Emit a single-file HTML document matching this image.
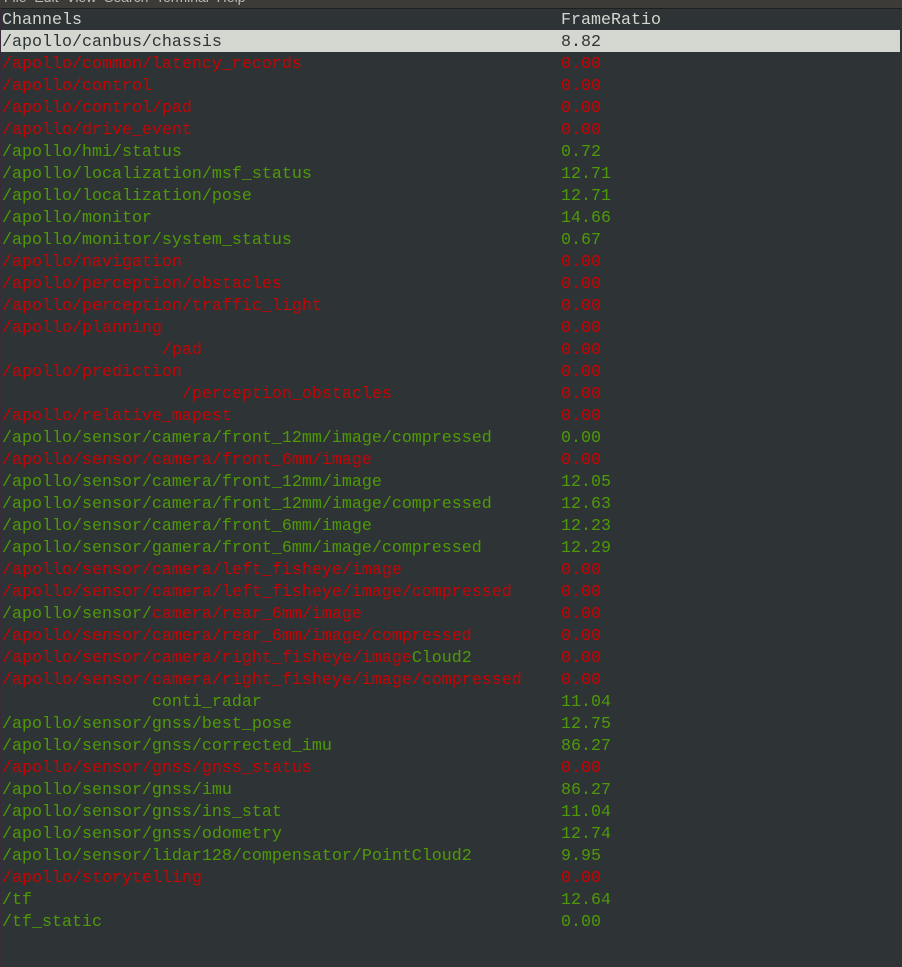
<!DOCTYPE html>
<html><head><meta charset="utf-8"><style>
html,body{margin:0;padding:0;}
body{width:902px;height:967px;background:#2e3436;position:relative;overflow:hidden;font-family:"Liberation Mono","DejaVu Sans Mono",monospace;font-size:16.67px;}
.menu{position:absolute;left:0;top:0;width:902px;height:8px;background:#3c3b37;overflow:hidden;border-bottom:1px solid #1f1f1f;}
.menu span{position:absolute;left:4px;top:-11px;color:#bdbdb6;font-family:"Liberation Sans",sans-serif;font-size:14px;white-space:pre;}
.lb{position:absolute;left:0;top:8px;width:1px;height:959px;background:#3b2a3a;}
.r{position:absolute;left:2px;height:20px;padding-top:2px;line-height:22px;white-space:pre;width:898px;}
.c2{position:absolute;left:559px;top:2px;}
.h{color:#d3d7cf;}
.s{background:#d3d7cf;color:#2e3436;left:1px;padding-left:1px;}
.s .c2{left:560px;}
.R{color:#cc0000;}
.G{color:#4e9a06;}
</style></head><body>
<div class="menu"><span>File  Edit  View  Search  Terminal  Help</span></div>
<div class="lb"></div>
<div class="r h" style="top:8px">Channels<span class="c2">FrameRatio</span></div>
<div class="r s" style="top:30px">/apollo/canbus/chassis<span class="c2">8.82</span></div>
<div class="r R" style="top:52px">/apollo/common/latency_records<span class="c2">0.00</span></div>
<div class="r R" style="top:74px">/apollo/control<span class="c2">0.00</span></div>
<div class="r R" style="top:96px">/apollo/control/pad<span class="c2">0.00</span></div>
<div class="r R" style="top:118px">/apollo/drive_event<span class="c2">0.00</span></div>
<div class="r G" style="top:140px">/apollo/hmi/status<span class="c2">0.72</span></div>
<div class="r G" style="top:162px">/apollo/localization/msf_status<span class="c2">12.71</span></div>
<div class="r G" style="top:184px">/apollo/localization/pose<span class="c2">12.71</span></div>
<div class="r G" style="top:206px">/apollo/monitor<span class="c2">14.66</span></div>
<div class="r G" style="top:228px">/apollo/monitor/system_status<span class="c2">0.67</span></div>
<div class="r R" style="top:250px">/apollo/navigation<span class="c2">0.00</span></div>
<div class="r R" style="top:272px">/apollo/perception/obstacles<span class="c2">0.00</span></div>
<div class="r R" style="top:294px">/apollo/perception/traffic_light<span class="c2">0.00</span></div>
<div class="r R" style="top:316px">/apollo/planning<span class="c2">0.00</span></div>
<div class="r R" style="top:338px">                /pad<span class="c2">0.00</span></div>
<div class="r R" style="top:360px">/apollo/prediction<span class="c2">0.00</span></div>
<div class="r R" style="top:382px">                  /perception_obstacles<span class="c2">0.00</span></div>
<div class="r R" style="top:404px">/apollo/relative_mapest<span class="c2">0.00</span></div>
<div class="r G" style="top:426px">/apollo/sensor/camera/front_12mm/image/compressed<span class="c2">0.00</span></div>
<div class="r R" style="top:448px">/apollo/sensor/camera/front_6mm/image<span class="c2">0.00</span></div>
<div class="r G" style="top:470px">/apollo/sensor/camera/front_12mm/image<span class="c2">12.05</span></div>
<div class="r G" style="top:492px">/apollo/sensor/camera/front_12mm/image/compressed<span class="c2">12.63</span></div>
<div class="r G" style="top:514px">/apollo/sensor/camera/front_6mm/image<span class="c2">12.23</span></div>
<div class="r G" style="top:536px">/apollo/sensor/gamera/front_6mm/image/compressed<span class="c2">12.29</span></div>
<div class="r R" style="top:558px">/apollo/sensor/camera/left_fisheye/image<span class="c2">0.00</span></div>
<div class="r R" style="top:580px">/apollo/sensor/camera/left_fisheye/image/compressed<span class="c2">0.00</span></div>
<div class="r G" style="top:602px">/apollo/sensor/<span class="R">camera/rear_6mm/image</span><span class="c2 R">0.00</span></div>
<div class="r R" style="top:624px">/apollo/sensor/camera/rear_6mm/image/compressed<span class="c2">0.00</span></div>
<div class="r R" style="top:646px">/apollo/sensor/camera/right_fisheye/image<span class="G">Cloud2</span><span class="c2">0.00</span></div>
<div class="r R" style="top:668px">/apollo/sensor/camera/right_fisheye/image/compressed<span class="c2">0.00</span></div>
<div class="r G" style="top:690px">               conti_radar<span class="c2">11.04</span></div>
<div class="r G" style="top:712px">/apollo/sensor/gnss/best_pose<span class="c2">12.75</span></div>
<div class="r G" style="top:734px">/apollo/sensor/gnss/corrected_imu<span class="c2">86.27</span></div>
<div class="r R" style="top:756px">/apollo/sensor/gnss/gnss_status<span class="c2">0.00</span></div>
<div class="r G" style="top:778px">/apollo/sensor/gnss/imu<span class="c2">86.27</span></div>
<div class="r G" style="top:800px">/apollo/sensor/gnss/ins_stat<span class="c2">11.04</span></div>
<div class="r G" style="top:822px">/apollo/sensor/gnss/odometry<span class="c2">12.74</span></div>
<div class="r G" style="top:844px">/apollo/sensor/lidar128/compensator/PointCloud2<span class="c2">9.95</span></div>
<div class="r R" style="top:866px">/apollo/storytelling<span class="c2">0.00</span></div>
<div class="r G" style="top:888px">/tf<span class="c2">12.64</span></div>
<div class="r G" style="top:910px">/tf_static<span class="c2">0.00</span></div>
</body></html>
